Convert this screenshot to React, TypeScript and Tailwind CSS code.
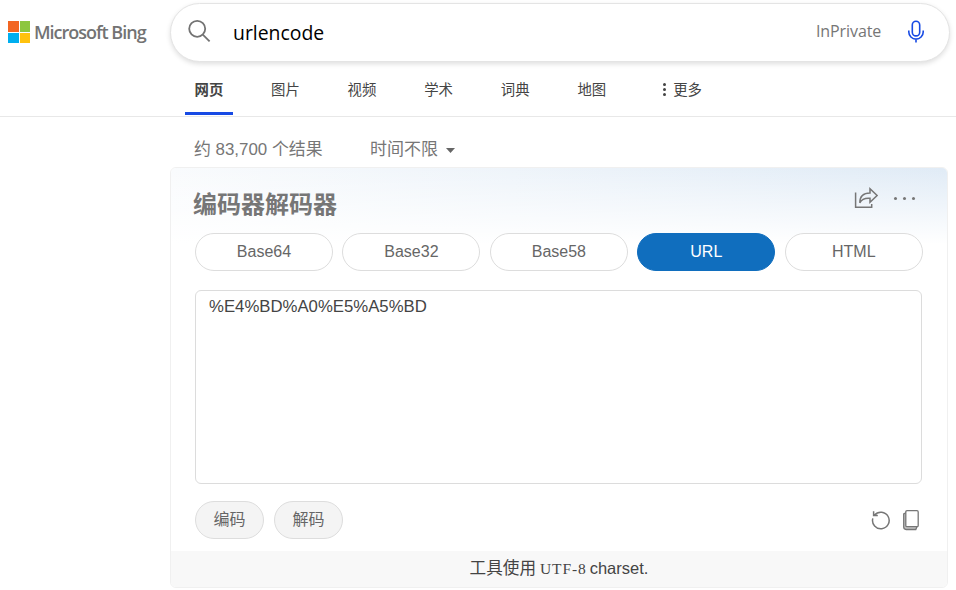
const segoe = 'font-["Open_Sans","Noto_Sans_CJK_SC",sans-serif]';
const arial = 'font-["Liberation_Sans","Noto_Sans_CJK_SC",sans-serif]';

const tabs = ['图片', '视频', '学术', '词典', '地图'];
const codecs = ['Base64', 'Base32', 'Base58', 'URL', 'HTML'];

function Logo() {
  return (
    <div className="mt-[21px] ml-2 flex h-[22px] w-[162px] shrink-0 items-center gap-[5px]">
      <div className="grid h-[22px] w-[22px] shrink-0 grid-cols-2 gap-px">
        <div className="bg-[#f26522]" />
        <div className="bg-[#8dc63f]" />
        <div className="bg-[#00aeef]" />
        <div className="bg-[#ffc20e]" />
      </div>
      <span className="-ml-px text-[18px] leading-[22px] font-semibold tracking-[-1px] whitespace-nowrap text-[#737373]">Microsoft Bing</span>
    </div>
  );
}

function SearchBox() {
  return (
    <div className="mt-[3px] flex h-[59px] w-[780px] shrink-0 items-center rounded-full border border-[#e4e4e4] bg-white shadow-[0_2px_5px_rgba(0,0,0,0.13)]">
      <svg className="mb-[3px] ml-[17px] shrink-0" width="24" height="24" viewBox="0 0 24 24" fill="none" stroke="#737373" strokeWidth="1.8">
        <circle cx="9.2" cy="9.8" r="8" />
        <path d="M14.8 15.6 21.6 22.4" />
      </svg>
      <span className="mt-px ml-[21px] w-[583px] text-[19.4px] leading-7 text-black">urlencode</span>
      <span className="mb-[3px] w-[91px] text-[16px] tracking-[-0.1px] text-[#767676]">InPrivate</span>
      <svg className="mb-[2px]" width="18" height="24" viewBox="0 0 18 24" fill="none" stroke="#174ae4" strokeWidth="1.6">
        <rect x="5.3" y="1.3" width="7.4" height="14.6" rx="3.7" />
        <path d="M1.8 10.5v1.4a7.2 7.2 0 0 0 14.4 0v-1.4M9 19v3.6" />
      </svg>
    </div>
  );
}

function Nav() {
  return (
    <nav className="flex h-[45px] pl-[185px] text-[14.4px] leading-5 text-[#444]">
      <div className="mt-[10px] h-[35px] w-12 border-b-[3px] border-[#174ae4] text-center font-bold text-[#444]">网页</div>
      <div className="mt-[10px] ml-[38px] flex gap-[47.8px]">
        {tabs.map((t) => (
          <span key={t}>{t}</span>
        ))}
      </div>
      <div className="mt-[10px] ml-[57px] flex h-5 items-center gap-[7px]">
        <span className="-mt-px flex flex-col gap-[2px]">
          <i className="size-[3px] rounded-full bg-[#444]" />
          <i className="size-[3px] rounded-full bg-[#444]" />
          <i className="size-[3px] rounded-full bg-[#444]" />
        </span>
        <span>更多</span>
      </div>
    </nav>
  );
}

function Card() {
  return (
    <section className={`${arial} ml-[170px] flex h-[421px] w-[778px] flex-col overflow-hidden rounded-[6px] border border-[#f0f0f0] bg-white text-[16px] text-[#666]`}>
      <div className="flex h-[383px] flex-col bg-[linear-gradient(to_bottom,rgba(255,255,255,0),white),linear-gradient(to_right,#f9fbfd,#e0ebf6)] bg-[length:100%_76px] bg-no-repeat px-6">
        <div className="flex h-[65px] justify-between">
          <h1 className="mt-[20px] -ml-[2px] text-[24px] leading-[34px] font-bold text-[#767676]">编码器解码器</h1>
          <div className="mt-[19px] flex h-[22px] items-center gap-[15px]">
            <svg width="25" height="22" viewBox="0 0 25 22" fill="none" stroke="#767676" strokeWidth="1.5">
              <path d="M1.6 5.5V20.3H17.7V17" />
              <path d="M5.8 15.8C5.8 9.4 9.5 6 16 6V1.8L23.1 8.5 16 15.3V11.3C10.8 10.8 7.7 12.3 5.8 15.8Z" />
            </svg>
            <div className="mt-px mr-2 flex gap-[6px]">
              <i className="size-[3px] rounded-full bg-[#767676]" />
              <i className="size-[3px] rounded-full bg-[#767676]" />
              <i className="size-[3px] rounded-full bg-[#767676]" />
            </div>
          </div>
        </div>
        <div className="flex gap-[9.45px]">
          {codecs.map((c) => (
            <button key={c} className={c === 'URL' ? 'h-[38px] w-[138px] shrink-0 rounded-full border border-[#106ebe] bg-[#106ebe] text-white' : 'h-[38px] w-[138px] shrink-0 rounded-full border border-[#ddd] bg-white'}>
              {c}
            </button>
          ))}
        </div>
        <div className="mt-[19px] h-[194px] w-[727px] rounded-[6px] border border-[#dcdcdc] bg-white px-[13px] py-[6px] text-[16.75px] leading-5 text-[#444]">%E4%BD%A0%E5%A5%BD</div>
        <div className="mt-[17px] flex items-center">
          <button className="h-[38px] w-[69px] rounded-full border border-[#ddd] bg-[#f4f4f4]">编码</button>
          <button className="ml-[10px] h-[38px] w-[69px] rounded-full border border-[#ddd] bg-[#f4f4f4]">解码</button>
          <svg className="ml-[528px]" width="20" height="20" viewBox="0 0 20 20" fill="none" stroke="#767676" strokeWidth="1.5">
            <path d="M1.8 8.4A8.3 8.3 0 1 0 3.5 5.1M2.6 1.3V5.5H6.8" />
          </svg>
          <svg className="ml-[11px]" width="18" height="22" viewBox="0 0 18 22" fill="none" stroke="#767676" strokeWidth="1.3">
            <path d="M3.8 3.8 1.7 4.9V18.1Q1.7 20.5 4.1 20.5H13.8L14.8 18Z" fill="#c4c4c4" />
            <rect x="3.8" y="1.7" width="12.4" height="15.9" rx="1.2" fill="white" />
          </svg>
        </div>
      </div>
      <footer className="flex h-9 items-center justify-center bg-[#f8f8f8] text-[#444]">
        <div className="mb-px flex items-baseline">
          <span className="text-[16.6px] leading-5">工具使用</span>
          <span className='ml-1 font-["Liberation_Serif",serif] text-[15.5px] leading-5 tracking-[0.9px]'>UTF-8</span>
          <span className="ml-[3px] text-[16.5px] leading-5">charset.</span>
        </div>
      </footer>
    </section>
  );
}

export default function App() {
  return (
    <main className={`${segoe} h-[590px] w-[956px] overflow-hidden bg-white`}>
      <header className="h-[117px] border-b border-[#e8e8e8]">
        <div className="flex h-[70px]">
          <Logo />
          <SearchBox />
        </div>
        <Nav />
      </header>
      <div className={`${arial} flex h-[50px] pl-[194px] text-[17px] leading-6 text-[#767676]`}>
        <span className="mt-[21px] w-[176px] text-[16.9px]">约 83,700 个结果</span>
        <span className="mt-[21px]">时间不限</span>
        <svg className="mt-[31px] ml-2" width="9" height="5" viewBox="0 0 9 5" fill="#666">
          <path d="M0 0H9L4.5 5Z" />
        </svg>
      </div>
      <Card />
    </main>
  );
}
